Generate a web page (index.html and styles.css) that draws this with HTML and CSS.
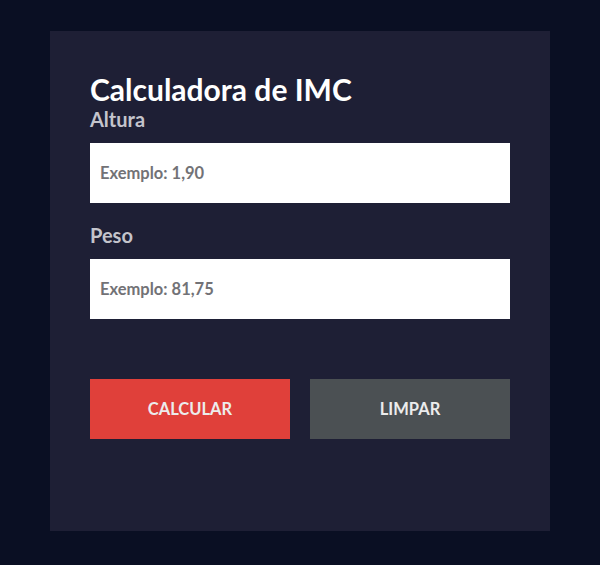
FILE: index.html
```html
<!DOCTYPE html>
<html lang="pt-BR">
<head>
    <meta charset="UTF-8">
    <meta name="viewport" content="width=device-width, initial-scale=1.0">
    <title>Calculadora de IMC</title>
    <link rel="stylesheet" href="styles.css">
</head>
<body>
    <div class="calc-container">
        <h1>Calculadora de IMC</h1>
        <form class="calc-form">
            <label for="altura">Altura</label>
            <input type="text" id="altura" placeholder="Exemplo: 1,90">

            <label for="peso">Peso</label>
            <input type="text" id="peso" placeholder="Exemplo: 81,75">

            <div class="calc-buttons">
                <button type="button" class="btn btn-calcular">Calcular</button>
                <button type="reset" class="btn btn-limpar">Limpar</button>
            </div>
        </form>
    </div>
</body>
</html>
```

FILE: styles.css
```css
* {
    margin: 0;
    padding: 0;
    box-sizing: border-box;
}

body {
    font-family: 'Lato', 'Noto Sans', sans-serif;
    background-color: #0a0f23;
    color: #ffffff;
    padding: 31px 50px;
}

.calc-container {
    width: 500px;
    height: 500px;
    background-color: #1e1f35;
    padding: 40px;
}

h1 {
    font-size: 30px;
    line-height: 36px;
    font-weight: bold;
    color: #ffffff;
}

.calc-form label {
    display: block;
    font-size: 20px;
    line-height: 24px;
    font-weight: bold;
    color: #c4c4cc;
    margin-bottom: 12px;
}

.calc-form input {
    display: block;
    width: 100%;
    height: 60px;
    border: none;
    outline: none;
    padding: 0 10px;
    font-family: inherit;
    font-size: 16.5px;
    font-weight: bold;
    color: #333;
    background-color: #ffffff;
    margin-bottom: 20px;
}

.calc-form input::placeholder {
    color: #727276;
}

.calc-buttons {
    display: flex;
    gap: 20px;
    margin-top: 60px;
}

.btn {
    width: 200px;
    height: 60px;
    border: none;
    font-family: inherit;
    font-size: 16.5px;
    font-weight: bold;
    text-transform: uppercase;
    color: #ececec;
    cursor: pointer;
}

.btn-calcular {
    background-color: #e0403a;
}

.btn-limpar {
    background-color: #4b5053;
}
```
